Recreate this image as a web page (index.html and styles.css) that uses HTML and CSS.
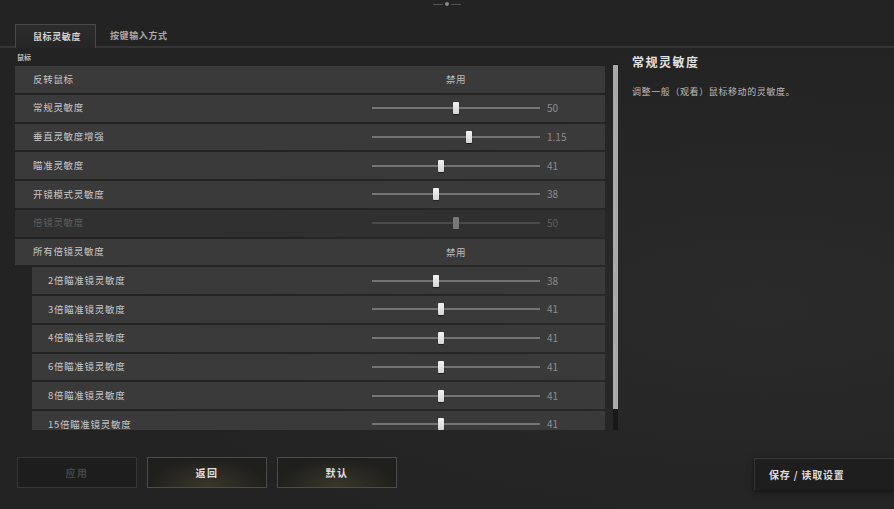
FILE: index.html
```html
<!DOCTYPE html>
<html lang="en">

<head>
  <meta charset="UTF-8">
  <meta name="viewport" content="width=device-width, initial-scale=1.0">
  <title>鼠标灵敏度</title>

  <link rel="stylesheet" href="styles.css">

</head>

<body>
  <div id="container">
    <!-- 상단 장식 -->
    <div class="top-deco">
      <span class="deco-line"></span><span class="deco-dot"></span><span class="deco-line"></span>
    </div>

    <div class="tabs">
      <div class="tab active">鼠标灵敏度</div>
      <div class="tab">按键输入方式</div>
    </div>

    <div class="content">
      <div class="settings">
        <div class="group-label">鼠标</div>
        <div class="list">
          <div class="row">
            <span class="label">反转鼠标</span>
            <div class="ctrl"><span class="toggle">禁用</span></div>
          </div>
          <div class="row">
            <span class="label">常规灵敏度</span>
            <div class="ctrl">
              <div class="slider"><div class="track"></div><div class="knob" style="left:50%"></div></div>
              <span class="val">50</span>
            </div>
          </div>
          <div class="row">
            <span class="label">垂直灵敏度增强</span>
            <div class="ctrl">
              <div class="slider"><div class="track"></div><div class="knob" style="left:57.5%"></div></div>
              <span class="val">1.15</span>
            </div>
          </div>
          <div class="row">
            <span class="label">瞄准灵敏度</span>
            <div class="ctrl">
              <div class="slider"><div class="track"></div><div class="knob" style="left:41%"></div></div>
              <span class="val">41</span>
            </div>
          </div>
          <div class="row">
            <span class="label">开镜模式灵敏度</span>
            <div class="ctrl">
              <div class="slider"><div class="track"></div><div class="knob" style="left:38%"></div></div>
              <span class="val">38</span>
            </div>
          </div>
          <div class="row disabled">
            <span class="label">倍镜灵敏度</span>
            <div class="ctrl">
              <div class="slider"><div class="track"></div><div class="knob" style="left:50%"></div></div>
              <span class="val">50</span>
            </div>
          </div>
          <div class="row">
            <span class="label">所有倍镜灵敏度</span>
            <div class="ctrl"><span class="toggle">禁用</span></div>
          </div>
          <div class="row sub">
            <span class="label">2倍瞄准镜灵敏度</span>
            <div class="ctrl">
              <div class="slider"><div class="track"></div><div class="knob" style="left:38%"></div></div>
              <span class="val">38</span>
            </div>
          </div>
          <div class="row sub">
            <span class="label">3倍瞄准镜灵敏度</span>
            <div class="ctrl">
              <div class="slider"><div class="track"></div><div class="knob" style="left:41%"></div></div>
              <span class="val">41</span>
            </div>
          </div>
          <div class="row sub">
            <span class="label">4倍瞄准镜灵敏度</span>
            <div class="ctrl">
              <div class="slider"><div class="track"></div><div class="knob" style="left:41%"></div></div>
              <span class="val">41</span>
            </div>
          </div>
          <div class="row sub">
            <span class="label">6倍瞄准镜灵敏度</span>
            <div class="ctrl">
              <div class="slider"><div class="track"></div><div class="knob" style="left:41%"></div></div>
              <span class="val">41</span>
            </div>
          </div>
          <div class="row sub">
            <span class="label">8倍瞄准镜灵敏度</span>
            <div class="ctrl">
              <div class="slider"><div class="track"></div><div class="knob" style="left:41%"></div></div>
              <span class="val">41</span>
            </div>
          </div>
          <div class="row sub">
            <span class="label">15倍瞄准镜灵敏度</span>
            <div class="ctrl">
              <div class="slider"><div class="track"></div><div class="knob" style="left:41%"></div></div>
              <span class="val">41</span>
            </div>
          </div>
        </div>
      </div>

      <div class="scrollbar"><div class="scroll-thumb"></div></div>

      <div class="info">
        <h2 class="info-title">常规灵敏度</h2>
        <p class="info-text">调整一般（观看）鼠标移动的灵敏度。</p>
      </div>
    </div>

    <div class="footer">
      <div class="btn-group">
        <button class="btn" disabled>应用</button>
        <button class="btn">返回</button>
        <button class="btn">默认</button>
      </div>
      <button class="btn-save">保存 / 读取设置</button>
    </div>
  </div>
</body>

</html>
```

FILE: styles.css
```css
/* reset */
html,
body,
div,
span,
h2,
p,
button {
  margin: 0;
  padding: 0;
  box-sizing: border-box;
}

/* style */
body {
  width: 894px;
  height: 509px;
  overflow: hidden;
  background-color: #232323;
  font-family: "Noto Sans CJK SC", "Noto Sans", sans-serif;
  color: #c8c8c8;
}

#container {
  width: 894px;
  height: 509px;
  background: radial-gradient(ellipse at 85% 60%, #2a2a2a 0%, #232323 60%);
}

/* top decoration */
.top-deco {
  height: 24px;
  display: flex;
  justify-content: center;
  align-items: flex-start;
  padding-top: 3px;
  gap: 2px;
}

.deco-line {
  width: 10px;
  height: 1px;
  margin-top: 1px;
  background-color: #555;
}

.deco-dot {
  width: 4px;
  height: 4px;
  margin-top: -1px;
  border-radius: 50%;
  background-color: #888;
}

/* tabs */
.tabs {
  display: flex;
  height: 24px;
  padding-left: 15px;
  border-bottom: 2px solid #353535;
}

.tab {
  height: 22px;
  padding: 0 14px;
  font-size: 9px;
  font-weight: bold;
  letter-spacing: 0.6px;
  line-height: 24px;
  color: #aaa;
}

.tab.active {
  width: 81px;
  height: 24px;
  margin-bottom: -2px;
  padding: 0 0 0 17px;
  line-height: 23px;
  color: #d0d0d0;
  border: 1px solid #484848;
  border-bottom: none;
  background: linear-gradient(#2c2c2c, #262626);
}

/* content */
.content {
  display: flex;
  height: 409px;
  padding-left: 15px;
}

.settings {
  width: 590px;
}

.group-label {
  height: 18px;
  padding: 5px 0 0 2px;
  font-size: 7px;
  font-weight: bold;
  line-height: 8px;
  color: #bbb;
}

.list {
  height: 364px;
  overflow: hidden;
}

.row {
  display: flex;
  align-items: center;
  height: 26.75px;
  margin-bottom: 2px;
  padding-left: 18px;
  background-color: #3a3a3a;
}

.row.sub {
  margin-left: 17px;
  padding-left: 16px;
}

.label {
  flex: 1;
  font-size: 9.5px;
  line-height: 1;
  letter-spacing: 0.7px;
  color: #c8c8c8;
}

.ctrl {
  display: flex;
  align-items: center;
  width: 233px;
}

.toggle {
  width: 168px;
  text-align: center;
  font-size: 9.5px;
  letter-spacing: 0.5px;
  color: #bdbdbd;
}

.slider {
  position: relative;
  width: 168px;
  height: 12px;
}

.track {
  position: absolute;
  top: 5px;
  left: 0;
  right: 0;
  height: 2px;
  background-color: #747474;
}

.knob {
  position: absolute;
  top: 0;
  width: 6px;
  height: 12px;
  margin-left: -3px;
  border-radius: 1px;
  background: linear-gradient(#f2f2f2, #d6d6d6);
  box-shadow: 0 1px 1px rgba(0, 0, 0, 0.5);
}

.val {
  padding-left: 7px;
  font-size: 10px;
  line-height: 1;
  color: #8c8c8c;
}

.row.disabled {
  background-color: #303030;
}

.row.disabled .label,
.row.disabled .val {
  color: #5e5e5e;
}

.row.disabled .track {
  background-color: #4a4a4a;
}

.row.disabled .knob {
  background: #777;
  box-shadow: none;
}

/* scrollbar */
.scrollbar {
  width: 5px;
  height: 366px;
  margin: 16px 0 0 8px;
  background-color: #181818;
}

.scroll-thumb {
  width: 5px;
  height: 344px;
  margin-top: 1px;
  background-color: #a9a9a9;
}

/* info */
.info {
  margin-left: 14px;
  padding-top: 5px;
}

.info-title {
  font-size: 12px;
  font-weight: bold;
  letter-spacing: 1.5px;
  color: #e2e2e2;
}

.info-text {
  margin-top: 15px;
  font-size: 9px;
  letter-spacing: 0.6px;
  color: #bbb;
}

/* footer */
.footer {
  display: flex;
  align-items: flex-start;
  padding-left: 17px;
}

.btn-group {
  display: flex;
  gap: 10px;
}

.btn {
  width: 120px;
  height: 31px;
  font-family: inherit;
  font-size: 10px;
  font-weight: bold;
  letter-spacing: 1.5px;
  color: #e0e0e0;
  border: 1px solid #4c4c4c;
  background: radial-gradient(ellipse at 50% 100%, #3a3729 0%, #1f1f1d 70%);
}

.btn:disabled {
  color: #454545;
  border-color: #363636;
  background: #1d1d1d;
}

.btn-save {
  width: 140px;
  height: 32px;
  margin-top: 1px;
  margin-left: auto;
  padding-left: 14px;
  text-align: left;
  font-family: inherit;
  font-size: 10px;
  font-weight: bold;
  letter-spacing: 0.8px;
  color: #dcdcdc;
  border: none;
  border-top: 1px solid #3a3a3a;
  border-left: 1px solid #333;
  background: #1e1e1e;
  box-shadow: 0 2px 6px rgba(0, 0, 0, 0.5);
}
```
